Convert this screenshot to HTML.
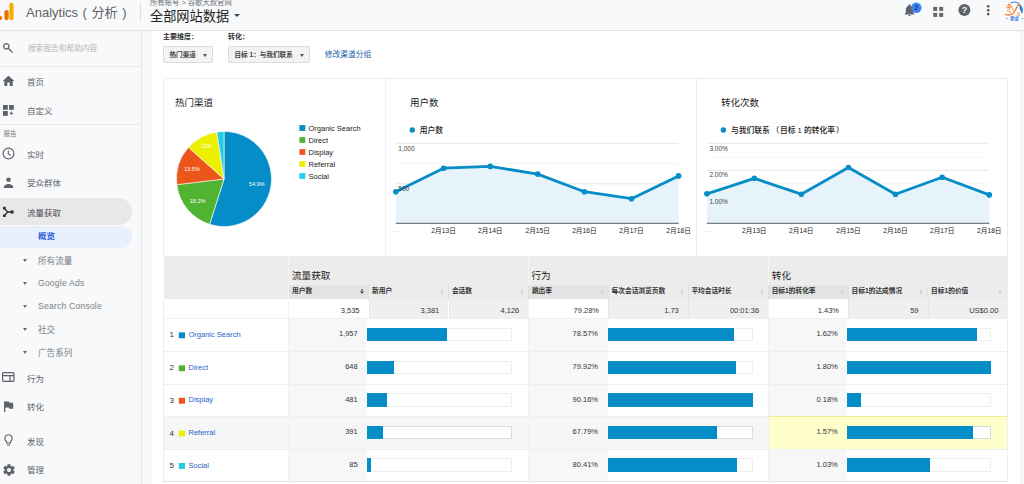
<!DOCTYPE html><html><head><meta charset="utf-8"><title>Analytics</title><style>
html,body{margin:0;padding:0}
body{width:1024px;height:484px;overflow:hidden;position:relative;background:#fff;font-family:"Liberation Sans","Noto Sans CJK SC",sans-serif;color:#222;-webkit-font-smoothing:antialiased}
.a{position:absolute;white-space:nowrap;line-height:1}
#hdr{left:0;top:0;width:1024px;height:30px;background:#f8f9fa;border-bottom:1px solid #e3e4e5}
#side{left:0;top:31px;width:141px;height:453px;background:#f8f9fa;border-right:1px solid #e2e3e4}
#gut{left:142px;top:31px;width:10px;height:453px;background:#f8f8f8}
#rstrip{left:1019.5px;top:31px;width:5px;height:453px;background:#f5f6f7}
.fp{display:inline-block;width:13.5px;text-align:center}
.nav{left:27px;font-size:8.5px;color:#7b7f83}
.sub{left:38px;font-size:8.6px;color:#7b7f83}
.tri{left:24px;font-size:5px;color:#6a6e72}
.lbl{font-size:7px;font-weight:bold;color:#333}
.dd{top:46px;height:17px;background:#f3f3f3;border:1px solid #dcdcdc;border-radius:2px;box-sizing:border-box}
.dd span{position:absolute;top:4.7px;font-size:6.6px;font-weight:bold;color:#444}
.caret{width:0;height:0;border-left:2.5px solid transparent;border-right:2.5px solid transparent;border-top:3px solid #555}
.ptitle{font-size:9.5px;color:#222}
.leg{font-size:7.5px;color:#222}
.th1{font-size:9.6px;color:#222;top:270.6px}
.th2{font-size:6.7px;font-weight:bold;color:#333;top:287.6px}
.num{font-size:7.5px;color:#333;text-align:right}
.lnk{font-size:7.5px;color:#2a62c9}
.idx{font-size:8px;color:#333}
</style></head><body><div class="a" id="hdr"></div><div class="a" id="side"></div><div class="a" id="gut"></div><div class="a" id="rstrip"></div><svg class="a" style="left:0;top:0" width="16" height="24" viewBox="0 0 16 24"><rect x="9.4" y="2.8" width="4.1" height="17.4" rx="2" fill="#f9ab00"/><rect x="4.4" y="10" width="4.3" height="10.2" rx="2.1" fill="#e37400"/><circle cx="0.2" cy="18" r="2.1" fill="#e37400"/></svg><div class="a" style="left:26px;top:5.5px;font-size:13px;color:#5f6368">Analytics<span class="fp">(</span>分析<span class="fp">)</span></div><div class="a" style="left:140px;top:3px;width:1px;height:19px;background:#e0e0e0"></div><div class="a" style="left:150px;top:-1px;font-size:7.35px;color:#6b6f73">所有帐号 &gt; 谷歌大叔官网</div><div class="a" style="left:150px;top:9.5px;font-size:13.2px;color:#222">全部网站数据</div><div class="a" style="left:234px;top:13.6px;width:0;height:0;border-left:3px solid transparent;border-right:3px solid transparent;border-top:3.5px solid #444"></div><svg class="a" style="left:900px;top:0" width="124" height="30" viewBox="0 0 124 30"><g transform="translate(9.500 10.300) scale(0.86) translate(-9.500 -10.500)"><path d="M9.5 17.5c.8 0 1.4-.6 1.4-1.4H8.100c0 .8.600 1.400 1.400 1.400zM13.800 13.300V9.700c0-2.200-1.200-4-3.200-4.500V4.700c0-.6-.5-1.100-1.100-1.100s-1.100.5-1.100 1.100v.5C6.400 5.700 5.200 7.500 5.200 9.700v3.600L3.800 14.700v.7h11.400v-.7z" fill="#5f6368"/></g><circle cx="16.300" cy="7.700" r="5.200" fill="#3b82f0"/><text x="16.300" y="10" font-size="6.500" font-weight="bold" text-anchor="middle" fill="#1a3a86" font-family="Liberation Sans, sans-serif">2</text><rect x="33.200" y="6.900" width="4" height="4" fill="#666"/><rect x="39.200" y="6.900" width="4" height="4" fill="#666"/><rect x="33.200" y="12.900" width="4" height="4" fill="#666"/><rect x="39.200" y="12.900" width="4" height="4" fill="#666"/><circle cx="64.400" cy="10" r="6" fill="#5f6368"/><text x="64.400" y="13.300" font-size="9" font-weight="bold" text-anchor="middle" fill="#f8f9fa" font-family="Liberation Sans, sans-serif">?</text><circle cx="88.200" cy="6.200" r="1.300" fill="#555"/><circle cx="88.200" cy="10.200" r="1.300" fill="#555"/><circle cx="88.200" cy="14.100" r="1.300" fill="#555"/><circle cx="113.800" cy="10.200" r="9.600" fill="#fdfdfd"/><path d="M110.300 3.100A8.600 8.600 0 0 1 119 3.200" stroke="#2f7de1" stroke-width="1" fill="none"/><path d="M119 3.200A8.600 8.600 0 0 1 122 14Q119 9 119 3.200Z" fill="#2878e6"/><path d="M105.500 14.400Q111.500 16.500 114.500 11.500T118.600 3.800" stroke="#f47b20" stroke-width="1.300" fill="none" stroke-linecap="round"/><path d="M107 5.600l3.200 -1.200M106.400 8l4.600 -1.200M108.700 4.200l.6 5.400M107.300 10.400q2.400 .2 3.800 2.600M110.800 5.500q1.500 3 3 5" stroke="#f47b20" stroke-width=".9" fill="none" stroke-linecap="round"/><path d="M119.600 12.600q-2.600 .4 -2.200 2.200q.6 1 2.400 .4" stroke="#f47b20" stroke-width=".9" fill="none" stroke-linecap="round"/><text x="114.600" y="20.400" font-size="4.400" font-weight="bold" text-anchor="middle" fill="#2f7de1" font-family="Noto Sans CJK SC, sans-serif">· 新卓 ·</text></svg><svg class="a" style="left:2px;top:42px" width="13" height="13" viewBox="0 0 13 13"><circle cx="4.300" cy="4.300" r="2.700" fill="none" stroke="#5f6368" stroke-width="1.200"/><path d="M6.500 6.500L10 10" stroke="#5f6368" stroke-width="1.400" stroke-linecap="round"/></svg><div class="a" style="left:28px;top:45px;font-size:7.7px;color:#b4b7ba">搜索报告和帮助内容</div><div class="a" style="left:0;top:66px;width:141px;height:1px;background:#e6e7e8"></div><div class="a" style="left:0;top:123.5px;width:141px;height:1px;background:#e9eaeb"></div><div class="a" style="left:0;top:198px;width:132px;height:27px;background:#e8e8e9;border-radius:0 14px 14px 0"></div><div class="a" style="left:0;top:226px;width:132px;height:22px;background:#e8f0fe;border-radius:0 11px 11px 0"></div><div class="a nav" style="top:77.9px;color:#5f6368">首页</div><div class="a nav" style="top:106.7px;color:#5f6368">自定义</div><div class="a nav" style="top:150.7px;color:#5f6368">实时</div><div class="a nav" style="top:179.4px;color:#5f6368">受众群体</div><div class="a nav" style="top:209.0px;color:#4a4d50">流量获取</div><div class="a nav" style="top:375.2px;color:#5f6368">行为</div><div class="a nav" style="top:403.4px;color:#5f6368">转化</div><div class="a nav" style="top:438.2px;color:#5f6368">发现</div><div class="a nav" style="top:466.2px;color:#5f6368">管理</div><div class="a" style="left:3.5px;top:130.7px;font-size:6.5px;color:#777">报告</div><div class="a" style="left:38px;top:232.1px;font-size:8.5px;color:#2a62d8;font-weight:bold">概览</div><div class="a sub" style="top:256.5px">所有流量</div><div class="a" style="left:23.3px;top:259.1px;width:0;height:0;border-left:2.5px solid transparent;border-right:2.5px solid transparent;border-top:3.5px solid #666"></div><div class="a sub" style="top:279.3px;letter-spacing:0.2px">Google Ads</div><div class="a" style="left:23.3px;top:281.9px;width:0;height:0;border-left:2.5px solid transparent;border-right:2.5px solid transparent;border-top:3.5px solid #666"></div><div class="a sub" style="top:302.3px;letter-spacing:0.2px">Search Console</div><div class="a" style="left:23.3px;top:304.9px;width:0;height:0;border-left:2.5px solid transparent;border-right:2.5px solid transparent;border-top:3.5px solid #666"></div><div class="a sub" style="top:325.7px">社交</div><div class="a" style="left:23.3px;top:328.3px;width:0;height:0;border-left:2.5px solid transparent;border-right:2.5px solid transparent;border-top:3.5px solid #666"></div><div class="a sub" style="top:348.5px">广告系列</div><div class="a" style="left:23.3px;top:351.1px;width:0;height:0;border-left:2.5px solid transparent;border-right:2.5px solid transparent;border-top:3.5px solid #666"></div><svg class="a" style="left:2px;top:75px" width="13" height="12" viewBox="0 0 13 12"><path d="M6.500 0.800L0.600 6h1.700v5h3V7.500h2.400V11h3V6h1.700z" fill="#5f6368"/></svg><svg class="a" style="left:2.9px;top:105.3px" width="12.5" height="12.5" viewBox="0 0 12 12"><rect x="0" y="0" width="4.600" height="4.600" fill="#5f6368"/><rect x="5.800" y="0" width="4.600" height="4.600" fill="#5f6368"/><rect x="0" y="5.800" width="4.600" height="4.600" fill="#5f6368"/><path d="M7.600 6.300v1.200H6.400v0.900h1.200v1.200h0.900V8.400h1.200v-0.900H8.500V6.300z" fill="#5f6368"/></svg><svg class="a" style="left:1.600px;top:147.100px" width="13" height="13" viewBox="0 0 13 13"><circle cx="6.500" cy="6.500" r="5.400" fill="none" stroke="#5f6368" stroke-width="1.200"/><path d="M6.300 3.500v3.300l2.400 1.400" fill="none" stroke="#5f6368" stroke-width="1.100"/></svg><svg class="a" style="left:2.600px;top:176.800px" width="12" height="12" viewBox="0 0 12 12"><circle cx="5.500" cy="2.800" r="2.300" fill="#5f6368"/><path d="M0.800 10.200c0-2.300 3.100-3.200 4.700-3.200s4.700.9 4.700 3.200v0.800H0.800z" fill="#5f6368"/></svg><svg class="a" style="left:2px;top:205px" width="13" height="14" viewBox="0 0 13 14"><path d="M2.3 3.1L5.8 7L2.3 10.8M5.8 7H10" stroke="#2b2b2b" stroke-width="1.3" fill="none"/><rect x="1" y="1.800" width="2.600" height="2.600" rx="0.500" fill="#2b2b2b"/><rect x="1" y="9.500" width="2.600" height="2.600" rx="0.500" fill="#2b2b2b"/><circle cx="10" cy="7" r="1.800" fill="#2b2b2b"/></svg><svg class="a" style="left:2px;top:372.3px" width="13" height="11" viewBox="0 0 13 11"><rect x="0.600" y="0.600" width="11.300" height="8.800" rx="1" fill="none" stroke="#5f6368" stroke-width="1.200"/><path d="M0.600 3.600h11.300M8 3.600v5.800" stroke="#5f6368" stroke-width="1.200"/></svg><svg class="a" style="left:3px;top:401px" width="11" height="12" viewBox="0 0 11 12"><path d="M1 0.500h5.200l0.300 1.200h3.700v6H6.200L5.900 6.500H2.300V11H1z" fill="#5f6368"/></svg><svg class="a" style="left:3px;top:434px" width="11" height="13" viewBox="0 0 11 13"><path d="M5.500 0.800a3.600 3.600 0 0 0-2 6.600v1.600h4V7.400a3.600 3.600 0 0 0-2-6.600z" fill="none" stroke="#5f6368" stroke-width="1.100"/><path d="M3.800 11h3.400" stroke="#5f6368" stroke-width="1.100"/></svg><svg class="a" style="left:1.5px;top:463px" width="14" height="14" viewBox="0 0 24 24"><path fill="#5f6368" d="M19.430 12.980c.040-.320.070-.640.070-.980s-.030-.660-.070-.980l2.110-1.650c.190-.150.240-.420.120-.640l-2-3.460c-.120-.220-.390-.300-.610-.220l-2.490 1c-.520-.400-1.080-.730-1.690-.980l-.380-2.650C14.460 2.180 14.250 2 14 2h-4c-.250 0-.460.180-.490.420l-.38 2.650c-.610.250-1.170.590-1.690.980l-2.490-1c-.230-.090-.490 0-.610.220l-2 3.460c-.130.220-.070.490.12.640l2.110 1.650c-.040.320-.070.650-.070.980s.030.660.070.980l-2.110 1.650c-.190.150-.240.420-.12.640l2 3.460c.120.220.390.300.610.220l2.490-1c.520.400 1.080.730 1.690.980l.38 2.650c.030.240.240.420.490.420h4c.250 0 .460-.180.490-.420l.38-2.650c.610-.250 1.170-.590 1.690-.980l2.490 1c.230.090.490 0 .610-.220l2-3.460c.120-.220.070-.490-.12-.640l-2.110-1.650zM12 15.500c-1.930 0-3.500-1.570-3.500-3.500s1.570-3.500 3.500-3.500 3.500 1.570 3.500 3.500-1.570 3.500-3.500 3.500z"/></svg><div class="a lbl" style="left:163px;top:33px">主要维度：</div><div class="a lbl" style="left:228px;top:33px">转化：</div><div class="a dd" style="left:163px;width:50px"><span style="left:5.5px">热门渠道</span><i class="a caret" style="left:39px;top:7px"></i></div><div class="a dd" style="left:228px;width:82px"><span style="left:5.5px">目标 1：与我们联系</span><i class="a caret" style="left:71px;top:7px"></i></div><div class="a" style="left:324.7px;top:50.5px;font-size:7.75px;color:#1a5fa8">修改渠道分组</div><div class="a" style="left:163px;top:78px;width:845px;height:179px;border:1px solid #eeeeee;box-sizing:border-box;background:#fff"></div><div class="a" style="left:385px;top:78px;width:1px;height:179px;background:#eeeeee"></div><div class="a" style="left:696px;top:78px;width:1px;height:179px;background:#eeeeee"></div><div class="a ptitle" style="left:175px;top:98px">热门渠道</div><div class="a ptitle" style="left:410px;top:98px">用户数</div><div class="a ptitle" style="left:721px;top:98px">转化次数</div><svg class="a" style="left:163px;top:110px" width="222" height="140" viewBox="163 110 222 140"><path d="M224.00 179.00 L224.00 131.50 A47.50 47.50 0 1 1 209.61 224.27 Z" fill="#058dc7" stroke="#fff" stroke-width="0.6"/><text x="256.9" y="186.4" font-size="5.5" fill="#fff" text-anchor="middle" font-family="Liberation Sans, sans-serif">54.9%</text><path d="M224.00 179.00 L209.61 224.27 A47.50 47.50 0 0 1 176.84 184.66 Z" fill="#50b432" stroke="#fff" stroke-width="0.6"/><text x="197.6" y="202.7" font-size="5.5" fill="#fff" text-anchor="middle" font-family="Liberation Sans, sans-serif">18.2%</text><path d="M224.00 179.00 L176.84 184.66 A47.50 47.50 0 0 1 188.57 147.36 Z" fill="#ed561b" stroke="#fff" stroke-width="0.6"/><text x="192.0" y="170.8" font-size="5.5" fill="#fff" text-anchor="middle" font-family="Liberation Sans, sans-serif">13.5%</text><path d="M224.00 179.00 L188.57 147.36 A47.50 47.50 0 0 1 216.86 132.04 Z" fill="#edef00" stroke="#fff" stroke-width="0.6"/><text x="206.4" y="148.2" font-size="5.5" fill="#fff" text-anchor="middle" font-family="Liberation Sans, sans-serif">11%</text><path d="M224.00 179.00 L216.86 132.04 A47.50 47.50 0 0 1 224.00 131.50 Z" fill="#24cbe5" stroke="#fff" stroke-width="0.6"/></svg><svg class="a" style="left:299px;top:125px" width="8" height="8" viewBox="0 0 8 8"><rect x="0.400" y="0.10" width="5.900" height="5.800" fill="#058dc7"/></svg><div class="a leg" style="left:308.500px;top:124.6px">Organic Search</div><svg class="a" style="left:299px;top:137px" width="8" height="8" viewBox="0 0 8 8"><rect x="0.400" y="0.10" width="5.900" height="5.800" fill="#50b432"/></svg><div class="a leg" style="left:308.500px;top:136.6px">Direct</div><svg class="a" style="left:299px;top:149px" width="8" height="8" viewBox="0 0 8 8"><rect x="0.400" y="0.10" width="5.900" height="5.800" fill="#ed561b"/></svg><div class="a leg" style="left:308.500px;top:148.6px">Display</div><svg class="a" style="left:299px;top:161px" width="8" height="8" viewBox="0 0 8 8"><rect x="0.400" y="0.10" width="5.900" height="5.800" fill="#edef00"/></svg><div class="a leg" style="left:308.500px;top:160.6px">Referral</div><svg class="a" style="left:299px;top:173px" width="8" height="8" viewBox="0 0 8 8"><rect x="0.400" y="0.10" width="5.900" height="5.800" fill="#24cbe5"/></svg><div class="a leg" style="left:308.500px;top:172.6px">Social</div><svg class="a" style="left:388px;top:120px" width="312" height="125" viewBox="388 120 312 125"><path d="M395.8 143.3H678.6" stroke="#e6e6e6" stroke-width="1"/><path d="M395.8 163.3H678.6" stroke="#f6f6f6" stroke-width="1"/><path d="M395.8 183.8H678.6" stroke="#e6e6e6" stroke-width="1"/><path d="M395.8 203.6H678.6" stroke="#f6f6f6" stroke-width="1"/><polygon points="395.8,191.7 443.6,168.2 490.3,166.4 537.7,174.1 584.4,191.7 631.5,198.7 678.6,175.9 678.6,223.3 395.8,223.3" fill="#e6f3fa"/><path d="M395.8 223.3H678.6" stroke="#333" stroke-width="0.8"/><polyline points="395.8,191.7 443.6,168.2 490.3,166.4 537.7,174.1 584.4,191.7 631.5,198.7 678.6,175.9" fill="none" stroke="#058dc7" stroke-width="2.800" stroke-linejoin="round"/><circle cx="395.8" cy="191.7" r="2.800" fill="#058dc7"/><circle cx="443.6" cy="168.2" r="2.800" fill="#058dc7"/><circle cx="490.3" cy="166.4" r="2.800" fill="#058dc7"/><circle cx="537.7" cy="174.1" r="2.800" fill="#058dc7"/><circle cx="584.4" cy="191.7" r="2.800" fill="#058dc7"/><circle cx="631.5" cy="198.7" r="2.800" fill="#058dc7"/><circle cx="678.6" cy="175.9" r="2.800" fill="#058dc7"/><text x="398.3" y="150.5" font-size="6.500" fill="#444" font-family="Liberation Sans, sans-serif">1,000</text><text x="398.3" y="191.2" font-size="6.500" fill="#444" font-family="Liberation Sans, sans-serif">500</text><text x="443.6" y="232.5" font-size="6.700" fill="#222" text-anchor="middle" font-family="Liberation Sans, Noto Sans CJK SC, sans-serif">2月13日</text><text x="490.3" y="232.5" font-size="6.700" fill="#222" text-anchor="middle" font-family="Liberation Sans, Noto Sans CJK SC, sans-serif">2月14日</text><text x="537.7" y="232.5" font-size="6.700" fill="#222" text-anchor="middle" font-family="Liberation Sans, Noto Sans CJK SC, sans-serif">2月15日</text><text x="584.4" y="232.5" font-size="6.700" fill="#222" text-anchor="middle" font-family="Liberation Sans, Noto Sans CJK SC, sans-serif">2月16日</text><text x="631.5" y="232.5" font-size="6.700" fill="#222" text-anchor="middle" font-family="Liberation Sans, Noto Sans CJK SC, sans-serif">2月17日</text><text x="678.6" y="232.5" font-size="6.700" fill="#222" text-anchor="middle" font-family="Liberation Sans, Noto Sans CJK SC, sans-serif">2月18日</text><text x="395.8" y="232" font-size="6" fill="#999" text-anchor="middle" font-family="Liberation Sans, sans-serif">…</text><circle cx="412.3" cy="130" r="2.700" fill="#058dc7"/><text x="419.8" y="132.800" font-size="7.750" font-weight="500" fill="#222" font-family="Liberation Sans, Noto Sans CJK SC, sans-serif">用户数</text></svg><svg class="a" style="left:699px;top:120px" width="312" height="125" viewBox="699 120 312 125"><path d="M706.9 143.3H989.3" stroke="#e6e6e6" stroke-width="1"/><path d="M706.9 157.0H989.3" stroke="#f6f6f6" stroke-width="1"/><path d="M706.9 170.3H989.3" stroke="#e6e6e6" stroke-width="1"/><path d="M706.9 183.6H989.3" stroke="#f6f6f6" stroke-width="1"/><path d="M706.9 197.0H989.3" stroke="#e6e6e6" stroke-width="1"/><path d="M706.9 210.0H989.3" stroke="#f6f6f6" stroke-width="1"/><polygon points="706.9,193.8 754.3,178.3 801.3,194.2 848.4,167.5 895.5,194.2 942.2,177.3 989.3,194.9 989.3,223.3 706.9,223.3" fill="#e6f3fa"/><path d="M706.9 223.3H989.3" stroke="#333" stroke-width="0.8"/><polyline points="706.9,193.8 754.3,178.3 801.3,194.2 848.4,167.5 895.5,194.2 942.2,177.3 989.3,194.9" fill="none" stroke="#058dc7" stroke-width="2.800" stroke-linejoin="round"/><circle cx="706.9" cy="193.8" r="2.800" fill="#058dc7"/><circle cx="754.3" cy="178.3" r="2.800" fill="#058dc7"/><circle cx="801.3" cy="194.2" r="2.800" fill="#058dc7"/><circle cx="848.4" cy="167.5" r="2.800" fill="#058dc7"/><circle cx="895.5" cy="194.2" r="2.800" fill="#058dc7"/><circle cx="942.2" cy="177.3" r="2.800" fill="#058dc7"/><circle cx="989.3" cy="194.9" r="2.800" fill="#058dc7"/><text x="709.4" y="150.5" font-size="6.500" fill="#444" font-family="Liberation Sans, sans-serif">3.00%</text><text x="709.4" y="177.2" font-size="6.500" fill="#444" font-family="Liberation Sans, sans-serif">2.00%</text><text x="709.4" y="204.0" font-size="6.500" fill="#444" font-family="Liberation Sans, sans-serif">1.00%</text><text x="754.3" y="232.5" font-size="6.700" fill="#222" text-anchor="middle" font-family="Liberation Sans, Noto Sans CJK SC, sans-serif">2月13日</text><text x="801.3" y="232.5" font-size="6.700" fill="#222" text-anchor="middle" font-family="Liberation Sans, Noto Sans CJK SC, sans-serif">2月14日</text><text x="848.4" y="232.5" font-size="6.700" fill="#222" text-anchor="middle" font-family="Liberation Sans, Noto Sans CJK SC, sans-serif">2月15日</text><text x="895.5" y="232.5" font-size="6.700" fill="#222" text-anchor="middle" font-family="Liberation Sans, Noto Sans CJK SC, sans-serif">2月16日</text><text x="942.2" y="232.5" font-size="6.700" fill="#222" text-anchor="middle" font-family="Liberation Sans, Noto Sans CJK SC, sans-serif">2月17日</text><text x="989.3" y="232.5" font-size="6.700" fill="#222" text-anchor="middle" font-family="Liberation Sans, Noto Sans CJK SC, sans-serif">2月18日</text><text x="706.9" y="232" font-size="6" fill="#999" text-anchor="middle" font-family="Liberation Sans, sans-serif">…</text><circle cx="723.4" cy="130" r="2.700" fill="#058dc7"/><text x="730.9" y="132.800" font-size="7.750" font-weight="500" fill="#222" font-family="Liberation Sans, Noto Sans CJK SC, sans-serif">与我们联系<tspan dx="1.8">（</tspan><tspan dx="0.7">目标 1 的转化率</tspan><tspan dx="1">）</tspan></text></svg><div class="a" style="left:164px;top:257px;width:844px;height:42px;background:#ececec"></div><div class="a" style="left:288.7px;top:285px;width:80.0px;height:14px;background:#e3e3e3"></div><div class="a" style="left:288.2px;top:257px;width:1px;height:42px;background:#f4f4f4"></div><div class="a" style="left:528.5px;top:285px;width:79.7px;height:14px;background:#e3e3e3"></div><div class="a" style="left:528.0px;top:257px;width:1px;height:42px;background:#f4f4f4"></div><div class="a" style="left:768.3px;top:285px;width:79.9px;height:14px;background:#e3e3e3"></div><div class="a" style="left:767.8px;top:257px;width:1px;height:42px;background:#f4f4f4"></div><div class="a th1" style="left:292px">流量获取</div><div class="a th1" style="left:531.500px">行为</div><div class="a th1" style="left:771.800px">转化</div><div class="a th2" style="left:292.1px">用户数</div><svg class="a" style="left:360.3px;top:288.500px" width="4" height="5" viewBox="0 0 4 5"><path d="M2 0V4M0.300 2.500L2 4.300L3.700 2.500" stroke="#333" stroke-width="1" fill="none"/></svg><div class="a th2" style="left:372.1px">新用户</div><svg class="a" style="left:440.1px;top:288.500px" width="4" height="5" viewBox="0 0 4 5"><path d="M2 0V4M0.300 2.500L2 4.300L3.700 2.500" stroke="#c4c4c4" stroke-width="0.8" fill="none"/></svg><div class="a" style="left:368.2px;top:285px;width:1px;height:14px;background:#e0e0e0"></div><div class="a th2" style="left:451.9px">会话数</div><svg class="a" style="left:520.1px;top:288.500px" width="4" height="5" viewBox="0 0 4 5"><path d="M2 0V4M0.300 2.500L2 4.300L3.700 2.500" stroke="#c4c4c4" stroke-width="0.8" fill="none"/></svg><div class="a" style="left:448.0px;top:285px;width:1px;height:14px;background:#e0e0e0"></div><div class="a th2" style="left:531.9px">跳出率</div><svg class="a" style="left:599.8px;top:288.500px" width="4" height="5" viewBox="0 0 4 5"><path d="M2 0V4M0.300 2.500L2 4.300L3.700 2.500" stroke="#c4c4c4" stroke-width="0.8" fill="none"/></svg><div class="a" style="left:528.0px;top:285px;width:1px;height:14px;background:#e0e0e0"></div><div class="a th2" style="left:611.6px">每次会话浏览页数</div><svg class="a" style="left:679.6px;top:288.500px" width="4" height="5" viewBox="0 0 4 5"><path d="M2 0V4M0.300 2.500L2 4.300L3.700 2.500" stroke="#c4c4c4" stroke-width="0.8" fill="none"/></svg><div class="a" style="left:607.7px;top:285px;width:1px;height:14px;background:#e0e0e0"></div><div class="a th2" style="left:691.4px">平均会话时长</div><svg class="a" style="left:759.9px;top:288.500px" width="4" height="5" viewBox="0 0 4 5"><path d="M2 0V4M0.300 2.500L2 4.300L3.700 2.500" stroke="#c4c4c4" stroke-width="0.8" fill="none"/></svg><div class="a" style="left:687.5px;top:285px;width:1px;height:14px;background:#e0e0e0"></div><div class="a th2" style="left:771.7px">目标1的转化率</div><svg class="a" style="left:839.8px;top:288.500px" width="4" height="5" viewBox="0 0 4 5"><path d="M2 0V4M0.300 2.500L2 4.300L3.700 2.500" stroke="#c4c4c4" stroke-width="0.8" fill="none"/></svg><div class="a" style="left:767.8px;top:285px;width:1px;height:14px;background:#e0e0e0"></div><div class="a th2" style="left:851.6px">目标1的达成情况</div><svg class="a" style="left:919.3px;top:288.500px" width="4" height="5" viewBox="0 0 4 5"><path d="M2 0V4M0.300 2.500L2 4.300L3.700 2.500" stroke="#c4c4c4" stroke-width="0.8" fill="none"/></svg><div class="a" style="left:847.7px;top:285px;width:1px;height:14px;background:#e0e0e0"></div><div class="a th2" style="left:931.1px">目标1的价值</div><svg class="a" style="left:998.1px;top:288.500px" width="4" height="5" viewBox="0 0 4 5"><path d="M2 0V4M0.300 2.500L2 4.300L3.700 2.500" stroke="#c4c4c4" stroke-width="0.8" fill="none"/></svg><div class="a" style="left:927.2px;top:285px;width:1px;height:14px;background:#e0e0e0"></div><div class="a" style="left:163px;top:299px;width:844px;height:20px;background:#fff"></div><div class="a" style="left:368.7px;top:299px;width:79.8px;height:19px;background:#efefef;border-left:1px solid #e6e6e6;box-sizing:border-box"></div><div class="a" style="left:448.5px;top:299px;width:80.0px;height:19px;background:#efefef;border-left:1px solid #e6e6e6;box-sizing:border-box"></div><div class="a" style="left:608.2px;top:299px;width:79.8px;height:19px;background:#efefef;border-left:1px solid #e6e6e6;box-sizing:border-box"></div><div class="a" style="left:688.0px;top:299px;width:80.3px;height:19px;background:#efefef;border-left:1px solid #e6e6e6;box-sizing:border-box"></div><div class="a" style="left:848.2px;top:299px;width:79.5px;height:19px;background:#efefef;border-left:1px solid #e6e6e6;box-sizing:border-box"></div><div class="a" style="left:927.7px;top:299px;width:79.9px;height:19px;background:#efefef;border-left:1px solid #e6e6e6;box-sizing:border-box"></div><div class="a num" style="left:299.5px;width:60px;top:307.200px">3,535</div><div class="a num" style="left:379.3px;width:60px;top:307.200px">3,381</div><div class="a num" style="left:459.3px;width:60px;top:307.200px">4,126</div><div class="a num" style="left:539.0px;width:60px;top:307.200px">79.28%</div><div class="a num" style="left:618.8px;width:60px;top:307.200px">1.73</div><div class="a num" style="left:699.1px;width:60px;top:307.200px">00:01:36</div><div class="a num" style="left:779.0px;width:60px;top:307.200px">1.43%</div><div class="a num" style="left:858.5px;width:60px;top:307.200px">59</div><div class="a num" style="left:938.4px;width:60px;top:307.200px">US$0.00</div><div class="a" style="left:163px;top:317.9px;width:844px;height:33.3px;background:#fff;border-top:1px solid #efefef;box-sizing:border-box"></div><div class="a" style="left:288.7px;top:318.9px;width:78.3px;height:32.3px;background:#f7f7f7"></div><div class="a" style="left:528.5px;top:318.9px;width:79.5px;height:32.3px;background:#f7f7f7"></div><div class="a" style="left:768.3px;top:318.9px;width:78.6px;height:32.3px;background:#f7f7f7"></div><div class="a idx" style="left:169.500px;top:331.3px">1</div><svg class="a" style="left:178px;top:332px" width="8" height="8" viewBox="0 0 8 8"><rect x="0.800" y="0.35" width="6.200" height="5.900" fill="#058dc7"/></svg><div class="a lnk" style="left:188.500px;top:330.9px">Organic Search</div><div class="a num" style="left:297.7px;width:60px;top:330.1px">1,957</div><div class="a num" style="left:538.0px;width:60px;top:330.1px">78.57%</div><div class="a num" style="left:777.8px;width:60px;top:330.1px">1.62%</div><div class="a" style="left:367.0px;top:327.6px;width:144.6px;height:13.500px;background:#fff;border:1px solid #eeeeee;box-sizing:border-box"></div><div class="a" style="left:367.0px;top:327.6px;width:80.1px;height:13.500px;background:#058dc7"></div><div class="a" style="left:608.0px;top:327.6px;width:144.6px;height:13.500px;background:#fff;border:1px solid #eeeeee;box-sizing:border-box"></div><div class="a" style="left:608.0px;top:327.6px;width:126.0px;height:13.500px;background:#058dc7"></div><div class="a" style="left:846.9px;top:327.6px;width:144.6px;height:13.500px;background:#fff;border:1px solid #eeeeee;box-sizing:border-box"></div><div class="a" style="left:846.9px;top:327.6px;width:130.1px;height:13.500px;background:#058dc7"></div><div class="a" style="left:163px;top:351.2px;width:844px;height:32.6px;background:#fff;border-top:1px solid #efefef;box-sizing:border-box"></div><div class="a" style="left:288.7px;top:352.2px;width:78.3px;height:31.6px;background:#f7f7f7"></div><div class="a" style="left:528.5px;top:352.2px;width:79.5px;height:31.6px;background:#f7f7f7"></div><div class="a" style="left:768.3px;top:352.2px;width:78.6px;height:31.6px;background:#f7f7f7"></div><div class="a idx" style="left:169.500px;top:364.3px">2</div><svg class="a" style="left:178px;top:365px" width="8" height="8" viewBox="0 0 8 8"><rect x="0.800" y="0.30" width="6.200" height="5.900" fill="#50b432"/></svg><div class="a lnk" style="left:188.500px;top:363.9px">Direct</div><div class="a num" style="left:297.7px;width:60px;top:363.1px">648</div><div class="a num" style="left:538.0px;width:60px;top:363.1px">79.92%</div><div class="a num" style="left:777.8px;width:60px;top:363.1px">1.80%</div><div class="a" style="left:367.0px;top:360.6px;width:144.6px;height:13.500px;background:#fff;border:1px solid #eeeeee;box-sizing:border-box"></div><div class="a" style="left:367.0px;top:360.6px;width:26.5px;height:13.500px;background:#058dc7"></div><div class="a" style="left:608.0px;top:360.6px;width:144.6px;height:13.500px;background:#fff;border:1px solid #eeeeee;box-sizing:border-box"></div><div class="a" style="left:608.0px;top:360.6px;width:128.2px;height:13.500px;background:#058dc7"></div><div class="a" style="left:846.9px;top:360.6px;width:144.6px;height:13.500px;background:#fff;border:1px solid #eeeeee;box-sizing:border-box"></div><div class="a" style="left:846.9px;top:360.6px;width:144.6px;height:13.500px;background:#058dc7"></div><div class="a" style="left:163px;top:383.8px;width:844px;height:32.4px;background:#fff;border-top:1px solid #efefef;box-sizing:border-box"></div><div class="a" style="left:288.7px;top:384.8px;width:78.3px;height:31.4px;background:#f7f7f7"></div><div class="a" style="left:528.5px;top:384.8px;width:79.5px;height:31.4px;background:#f7f7f7"></div><div class="a" style="left:768.3px;top:384.8px;width:78.6px;height:31.4px;background:#f7f7f7"></div><div class="a idx" style="left:169.500px;top:396.8px">3</div><svg class="a" style="left:178px;top:397px" width="8" height="8" viewBox="0 0 8 8"><rect x="0.800" y="0.80" width="6.200" height="5.900" fill="#ed561b"/></svg><div class="a lnk" style="left:188.500px;top:396.4px">Display</div><div class="a num" style="left:297.7px;width:60px;top:395.6px">481</div><div class="a num" style="left:538.0px;width:60px;top:395.6px">90.16%</div><div class="a num" style="left:777.8px;width:60px;top:395.6px">0.18%</div><div class="a" style="left:367.0px;top:393.1px;width:144.6px;height:13.500px;background:#fff;border:1px solid #eeeeee;box-sizing:border-box"></div><div class="a" style="left:367.0px;top:393.1px;width:19.7px;height:13.500px;background:#058dc7"></div><div class="a" style="left:608.0px;top:393.1px;width:144.6px;height:13.500px;background:#fff;border:1px solid #eeeeee;box-sizing:border-box"></div><div class="a" style="left:608.0px;top:393.1px;width:144.6px;height:13.500px;background:#058dc7"></div><div class="a" style="left:846.9px;top:393.1px;width:144.6px;height:13.500px;background:#fff;border:1px solid #eeeeee;box-sizing:border-box"></div><div class="a" style="left:846.9px;top:393.1px;width:14.5px;height:13.500px;background:#058dc7"></div><div class="a" style="left:163px;top:416.2px;width:844px;height:33.0px;background:#f6f6f6;border-top:1px solid #efefef;box-sizing:border-box"></div><div class="a" style="left:768.3px;top:416.2px;width:239.3px;height:34.0px;background:#ffffcc;border:1px solid #ecec9a;box-sizing:border-box"></div><div class="a idx" style="left:169.500px;top:429.5px">4</div><svg class="a" style="left:178px;top:430px" width="8" height="8" viewBox="0 0 8 8"><rect x="0.800" y="0.50" width="6.200" height="5.900" fill="#edef00"/></svg><div class="a lnk" style="left:188.500px;top:429.1px">Referral</div><div class="a num" style="left:297.7px;width:60px;top:428.3px">391</div><div class="a num" style="left:538.0px;width:60px;top:428.3px">67.79%</div><div class="a num" style="left:777.8px;width:60px;top:428.3px">1.57%</div><div class="a" style="left:367.0px;top:425.8px;width:144.6px;height:13.500px;background:#fff;border:1px solid #dadada;box-sizing:border-box"></div><div class="a" style="left:367.0px;top:425.8px;width:16.0px;height:13.500px;background:#058dc7"></div><div class="a" style="left:608.0px;top:425.8px;width:144.6px;height:13.500px;background:#fff;border:1px solid #dadada;box-sizing:border-box"></div><div class="a" style="left:608.0px;top:425.8px;width:108.7px;height:13.500px;background:#058dc7"></div><div class="a" style="left:846.9px;top:425.8px;width:144.6px;height:13.500px;background:#fff;border:1px solid #dadada;box-sizing:border-box"></div><div class="a" style="left:846.9px;top:425.8px;width:126.1px;height:13.500px;background:#058dc7"></div><div class="a" style="left:163px;top:449.2px;width:844px;height:32.0px;background:#fff;border-top:1px solid #efefef;box-sizing:border-box"></div><div class="a" style="left:288.7px;top:450.2px;width:78.3px;height:31.0px;background:#f7f7f7"></div><div class="a" style="left:528.5px;top:450.2px;width:79.5px;height:31.0px;background:#f7f7f7"></div><div class="a" style="left:768.3px;top:450.2px;width:78.6px;height:31.0px;background:#f7f7f7"></div><div class="a idx" style="left:169.500px;top:462.0px">5</div><svg class="a" style="left:178px;top:463px" width="8" height="8" viewBox="0 0 8 8"><rect x="0.800" y="0.00" width="6.200" height="5.900" fill="#24cbe5"/></svg><div class="a lnk" style="left:188.500px;top:461.6px">Social</div><div class="a num" style="left:297.7px;width:60px;top:460.8px">85</div><div class="a num" style="left:538.0px;width:60px;top:460.8px">80.41%</div><div class="a num" style="left:777.8px;width:60px;top:460.8px">1.03%</div><div class="a" style="left:367.0px;top:458.3px;width:144.6px;height:13.500px;background:#fff;border:1px solid #eeeeee;box-sizing:border-box"></div><div class="a" style="left:367.0px;top:458.3px;width:3.5px;height:13.500px;background:#058dc7"></div><div class="a" style="left:608.0px;top:458.3px;width:144.6px;height:13.500px;background:#fff;border:1px solid #eeeeee;box-sizing:border-box"></div><div class="a" style="left:608.0px;top:458.3px;width:129.0px;height:13.500px;background:#058dc7"></div><div class="a" style="left:846.9px;top:458.3px;width:144.6px;height:13.500px;background:#fff;border:1px solid #eeeeee;box-sizing:border-box"></div><div class="a" style="left:846.9px;top:458.3px;width:82.7px;height:13.500px;background:#058dc7"></div><div class="a" style="left:288.2px;top:299px;width:1px;height:182px;background:#f1f1f1"></div><div class="a" style="left:528.0px;top:299px;width:1px;height:182px;background:#f1f1f1"></div><div class="a" style="left:767.8px;top:299px;width:1px;height:182px;background:#f1f1f1"></div><div class="a" style="left:163px;top:299px;width:1px;height:183px;background:#eeeeee"></div><div class="a" style="left:1007px;top:299px;width:1px;height:183px;background:#eeeeee"></div><div class="a" style="left:163px;top:481px;width:845px;height:1px;background:#e4e4e4"></div></body></html>
